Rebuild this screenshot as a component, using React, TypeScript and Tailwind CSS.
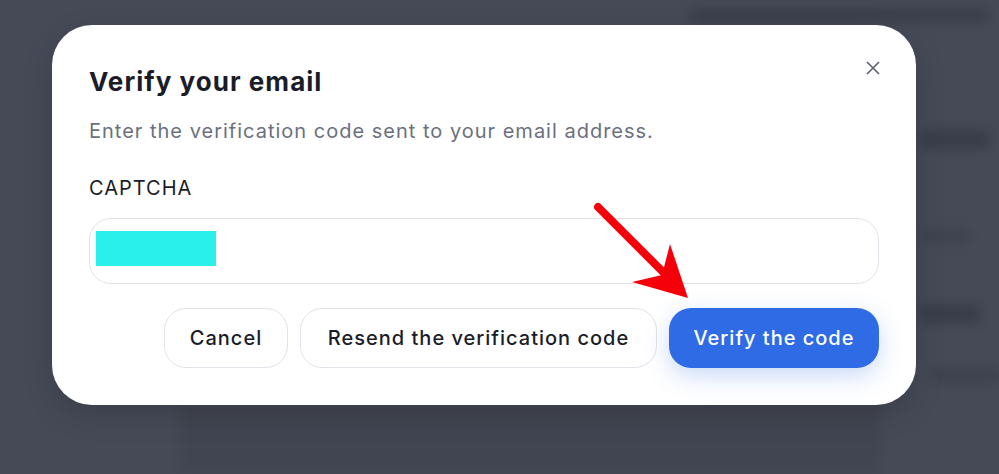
import React from 'react';

const App: React.FC = () => {
  return (
    <div
      className="relative w-[999px] h-[474px] overflow-hidden bg-[#464a57]"
      style={{ fontFamily: 'Inter, "Liberation Sans", sans-serif' }}
    >
      {/* blurred page behind the dialog */}
      <div className="absolute inset-0 blur-[6px] opacity-70">
        <div className="absolute left-[690px] top-[8px] w-[300px] h-[14px] rounded bg-[#363945]" />
        <div className="absolute left-[920px] top-[130px] w-[70px] h-[18px] rounded bg-[#333642]" />
        <div className="absolute left-[920px] top-[230px] w-[50px] h-[12px] rounded bg-[#3a3d49]" />
        <div className="absolute left-[920px] top-[305px] w-[60px] h-[18px] rounded bg-[#333642]" />
        <div className="absolute left-[930px] top-[368px] w-[69px] h-[14px] rounded bg-[#3a3d49]" />
        <div className="absolute left-[180px] top-[400px] w-[700px] h-[74px] bg-[#40434f]" />
      </div>

      <div className="relative flex pt-[25px] pl-[52px]">
        <div className="relative w-[864px] h-[380px] bg-white rounded-[40px] shadow-[0_10px_30px_rgba(0,0,0,0.15)] px-[37px] pt-[41px] pb-[37px] flex flex-col">
          <button className="absolute right-[36px] top-[36px] w-[14px] h-[14px] text-[#5b6070]">
            <svg viewBox="0 0 14 14" className="w-[14px] h-[14px]" fill="none" stroke="currentColor" strokeWidth={1.6}>
              <path d="M1 1l12 12M13 1L1 13" />
            </svg>
          </button>

          <h2 className="text-[26px] leading-[32px] font-bold text-[#1a1d29] tracking-[0.04em]">Verify your email</h2>
          <p className="mt-[19px] text-[20px] leading-[28px] text-[#6b7080] tracking-[0.05em]">
            Enter the verification code sent to your email address.
          </p>
          <label className="mt-[29px] text-[20px] leading-[28px] text-[#1a1d29] tracking-[0.05em]">CAPTCHA</label>

          <div className="mt-[16px] h-[66px] rounded-[22px] border border-[#e2e2ea] flex items-start pt-[12px] pl-[6px]">
            <div className="w-[120px] h-[35px] bg-[#29f0ea]" />
          </div>

          <div className="mt-[24px] flex justify-end gap-[12px] text-[20px] font-medium tracking-[0.05em]">
            <button className="h-[60px] w-[124px] rounded-[22px] border border-[#e2e2ea] bg-white text-[#1a1d29]">
              Cancel
            </button>
            <button className="h-[60px] w-[357px] rounded-[22px] border border-[#e2e2ea] bg-white text-[#1a1d29]">
              Resend the verification code
            </button>
            <button className="h-[60px] w-[210px] rounded-[22px] bg-[#2f6be4] text-white shadow-[0_8px_24px_rgba(47,107,228,0.25)]">
              Verify the code
            </button>
          </div>
        </div>
      </div>

      {/* red annotation arrow */}
      <svg className="absolute left-0 top-0 w-[999px] h-[474px] pointer-events-none" viewBox="0 0 999 474">
        <path d="M598 207L668 277" stroke="#f5000a" strokeWidth={8} strokeLinecap="round" />
        <path d="M688 298L632 282L662 275L670 244Z" fill="#f5000a" />
      </svg>
    </div>
  );
};

export default App;
